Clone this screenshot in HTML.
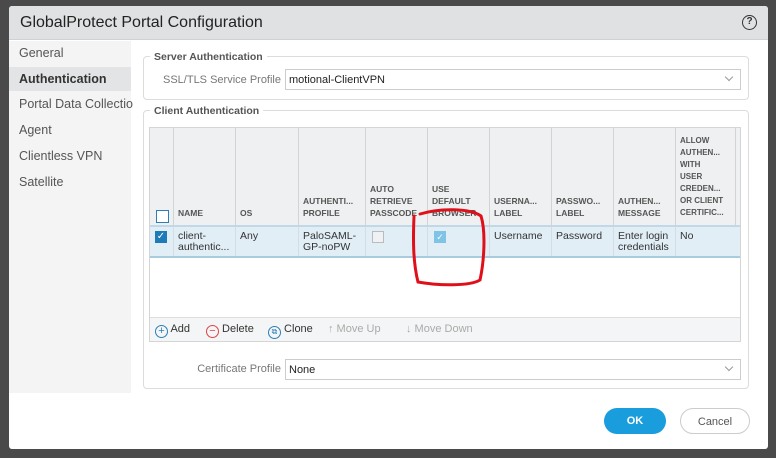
<!DOCTYPE html>
<html><head><style>
*{box-sizing:border-box;margin:0;padding:0}
body{width:776px;height:458px;background:#4a4a4a;font-family:"Liberation Sans",sans-serif;position:relative;overflow:hidden}
.dlg{position:absolute;left:9px;top:6px;width:759px;height:443px;background:#fff;border-radius:3px;overflow:hidden}
.title{position:absolute;left:0;top:0;width:100%;height:34px;background:#dfe1e3;border-bottom:1px solid #cfd2d5}
.title span{position:absolute;left:11px;top:8px;font-size:16px;color:#222}
.help{position:absolute;right:11px;top:9px;width:15px;height:15px;border:1.5px solid #333;border-radius:50%;font-size:10px;font-weight:bold;text-align:center;line-height:12px;color:#333}
.nav{position:absolute;left:0;top:35px;width:122px;height:352px;background:#f4f4f4}
.nav div{position:absolute;left:10px;font-size:12.5px;color:#555;white-space:nowrap}
.sel{background:#e2e4e6;left:0!important;width:122px;padding-left:10px;height:24px;line-height:24px;font-weight:bold;color:#333!important}
.fs{position:absolute;border:1px solid #dcdcdc;border-radius:4px}
.lg{position:absolute;font-size:10.5px;font-weight:bold;color:#555;background:#fff;padding:0 4px}
.lbl{position:absolute;font-size:11px;color:#777;text-align:right}
.selb{position:absolute;border:1px solid #ccc;height:21px;font-size:11px;color:#222;padding:4px 3px}
.selb i{position:absolute;right:8px;top:4px;width:6px;height:6px;border-right:1px solid #999;border-bottom:1px solid #999;transform:rotate(45deg)}
.tbl{position:absolute;left:140px;top:121px;width:592px;height:215px;border:1px solid #d5d5d5}
.hdr{position:absolute;left:0;top:0;width:590px;height:99px;background:#eef0f1;border-bottom:2px solid #c0d8e8}
.col{position:absolute;top:0;height:99px;border-right:1px solid #d3d3d3;font-size:8.5px;font-weight:bold;color:#555;line-height:12px;padding:0 3px 8px 4px;display:flex;flex-direction:column;justify-content:flex-end;white-space:nowrap;overflow:hidden}
.row{position:absolute;left:0;top:99px;width:590px;height:31px;background:#e1eef6;border-bottom:2px solid #a9cbe0}
.cell{position:absolute;top:0;height:29px;border-right:1px solid #d3dde3;font-size:10.5px;color:#333;padding:4px 4px;line-height:11px}
.tb{position:absolute;left:0;top:189px;width:590px;height:24px;background:#f4f5f6;border-top:1px solid #ddd;font-size:11px}
.tb span{position:absolute;top:5px}
.cb{position:absolute;width:12px;height:12px;border:1px solid #bbb;background:#fff}
.btn{position:absolute;height:26px;border-radius:13px;font-size:11px;text-align:center;line-height:26px}
</style></head><body>
<div class="dlg">
<div class="title"><span>GlobalProtect Portal Configuration</span><div class="help">?</div></div>
<div class="nav">
<div style="top:5px">General</div>
<div class="sel" style="top:26px">Authentication</div>
<div style="top:56px">Portal Data Collectio</div>
<div style="top:82px">Agent</div>
<div style="top:108px">Clientless VPN</div>
<div style="top:134px">Satellite</div>
</div>
<div class="fs" style="left:134px;top:50px;width:606px;height:44px"></div>
<div class="lg" style="left:141px;top:45px">Server Authentication</div>
<div class="lbl" style="left:150px;top:68px;width:122px">SSL/TLS Service Profile</div>
<div class="selb" style="left:276px;top:63px;width:456px">motional-ClientVPN<i></i></div>
<div class="fs" style="left:134px;top:104px;width:606px;height:279px"></div>
<div class="lg" style="left:141px;top:99px">Client Authentication</div>
<div class="tbl">
<div class="hdr">
<div class="col" style="left:0;width:24px"><div class="cb" style="position:relative;left:2px;top:4px;border-color:#2a7fb8;width:13px;height:13px"></div></div>
<div class="col" style="left:24px;width:62px">NAME</div>
<div class="col" style="left:86px;width:63px">OS</div>
<div class="col" style="left:149px;width:67px">AUTHENTI...<br>PROFILE</div>
<div class="col" style="left:216px;width:62px">AUTO<br>RETRIEVE<br>PASSCODE</div>
<div class="col" style="left:278px;width:62px">USE<br>DEFAULT<br>BROWSER</div>
<div class="col" style="left:340px;width:62px">USERNA...<br>LABEL</div>
<div class="col" style="left:402px;width:62px">PASSWO...<br>LABEL</div>
<div class="col" style="left:464px;width:62px">AUTHEN...<br>MESSAGE</div>
<div class="col" style="left:526px;width:60px;font-size:8px;line-height:12px">ALLOW<br>AUTHEN...<br>WITH<br>USER<br>CREDEN...<br>OR CLIENT<br>CERTIFIC...</div>
</div>
<div class="row">
<div class="cell" style="left:0;width:24px"><div class="cb" style="left:5px;top:4px;background:#1f7ab8;border-color:#1f7ab8;color:#fff;font-size:10px;line-height:10px;text-align:center">✓</div></div>
<div class="cell" style="left:24px;width:62px">client-<br>authentic...</div>
<div class="cell" style="left:86px;width:63px">Any</div>
<div class="cell" style="left:149px;width:67px">PaloSAML-<br>GP-noPW</div>
<div class="cell" style="left:216px;width:62px"><div class="cb" style="left:6px;top:4px;background:#eef2f4"></div></div>
<div class="cell" style="left:278px;width:62px"><div class="cb" style="left:6px;top:4px;background:#7fc3e6;border-color:#7fc3e6;color:#fff;font-size:9px;line-height:10px;text-align:center">✓</div></div>
<div class="cell" style="left:340px;width:62px">Username</div>
<div class="cell" style="left:402px;width:62px">Password</div>
<div class="cell" style="left:464px;width:62px">Enter login<br>credentials</div>
<div class="cell" style="left:526px;width:60px;border:0">No</div>
</div>
<div class="tb">
<span style="left:5px;color:#333"><span style="position:static;display:inline-block;width:13px;height:13px;border:1px solid #2a7fb8;border-radius:50%;text-align:center;line-height:10px;color:#2a7fb8;vertical-align:-2px">+</span> Add</span>
<span style="left:56px;color:#333"><span style="position:static;display:inline-block;width:13px;height:13px;border:1px solid #d44;border-radius:50%;text-align:center;line-height:10px;color:#d44;vertical-align:-2px">−</span> Delete</span>
<span style="left:118px;color:#333"><span style="position:static;display:inline-block;width:13px;height:13px;border:1px solid #2a7fb8;border-radius:50%;text-align:center;line-height:10px;color:#2a7fb8;font-size:8px;vertical-align:-2px">⧉</span> Clone</span>
<span style="left:178px;color:#aaa">↑ Move Up</span>
<span style="left:256px;color:#aaa">↓ Move Down</span>
</div>
</div>
<div class="lbl" style="left:150px;top:357px;width:122px">Certificate Profile</div>
<div class="selb" style="left:276px;top:353px;width:456px">None<i></i></div>
<div class="btn" style="left:595px;top:402px;width:62px;background:#1a9ddc;color:#fff;font-weight:bold">OK</div>
<div class="btn" style="left:671px;top:402px;width:70px;border:1px solid #ccc;color:#555">Cancel</div>
</div>
<svg style="position:absolute;left:0;top:0" width="776" height="458"><path d="M420 214 C440 208,470 208,481 216 C486 232,484 262,480 280 C470 286,440 286,418 282 C413 262,413 240,414 216" fill="none" stroke="#e0101a" stroke-width="3" stroke-linecap="round"/></svg>
</body></html>
